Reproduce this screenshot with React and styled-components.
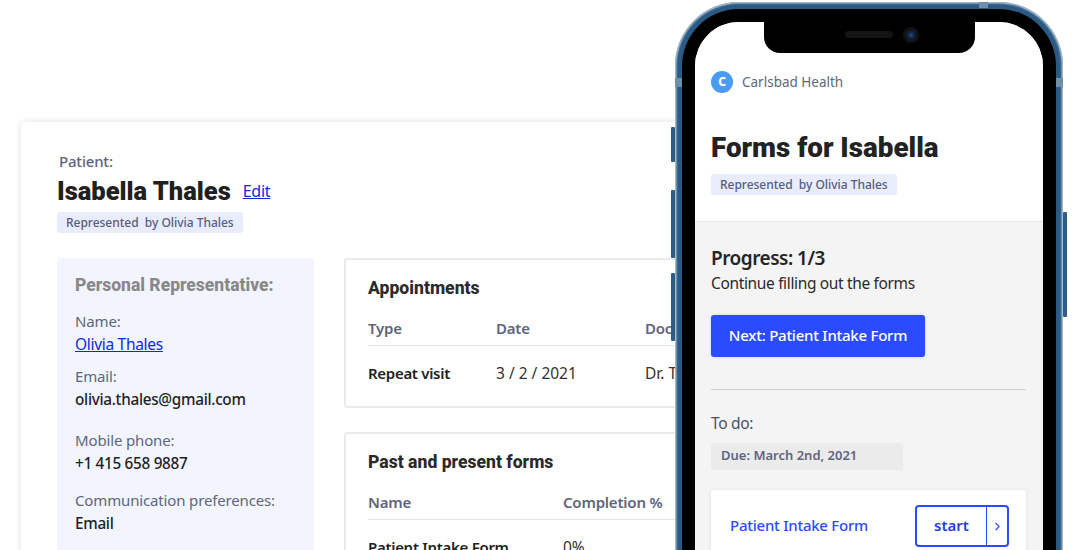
import React from 'react';
import styled, { createGlobalStyle } from 'styled-components';
import { ChevronRight } from 'lucide-react';

const GlobalStyle = createGlobalStyle`
  html, body {
    margin: 0;
    background: #fff;
    font-family: 'Noto Sans', 'Open Sans', sans-serif;
    overflow: hidden;
  }
  * { box-sizing: border-box; }
`;

const Page = styled.div`
  position: relative;
  width: 1080px;
  height: 550px;
  overflow: hidden;
  padding: 122px 0 0 21px;
  background: #fff;
`;

const DashCard = styled.section`
  width: 1000px;
  height: 600px;
  padding: 29px 36px;
  background: #fff;
  border-radius: 4px;
  box-shadow: 0 0 6px rgba(0, 0, 0, 0.14);
`;

const PatientLabel = styled.div`
  margin-left: 2px;
  font-size: 15px;
  line-height: 20px;
  font-weight: 500;
  color: #60657b;
  letter-spacing: -0.2px;
`;

const NameRow = styled.div`
  display: flex;
  align-items: center;
  gap: 12px;
  margin-top: 4px;
`;

const PatientName = styled.h1`
  margin: 0;
  font-family: 'Roboto', sans-serif;
  font-size: 25.5px;
  line-height: 32px;
  font-weight: 900;
  color: #202020;
`;

const TextLink = styled.a`
  color: #0b2bd8;
  text-decoration: underline;
  font-size: ${(p) => p.$size || 16}px;
  letter-spacing: -0.3px;
`;

const Badge = styled.span`
  display: inline-block;
  height: 21px;
  padding: 0 9px;
  border-radius: 3px;
  background: #e9ecfb;
  color: #555d85;
  font-size: 12px;
  line-height: 21px;
  font-weight: 500;
  white-space: pre;
  letter-spacing: -0.02px;
`;

const PatientBadge = styled(Badge)`
  margin-top: 5px;
`;

const Columns = styled.div`
  display: grid;
  grid-template-columns: 257px 1fr;
  gap: 30px;
  margin-top: 25px;
`;

const RepPanel = styled.aside`
  height: 400px;
  padding: 16px 18px;
  border-radius: 3px;
  background: #f2f5ff;
`;

const RepTitle = styled.h3`
  margin: 0 0 14px;
  font-family: 'Roboto', sans-serif;
  font-size: 17.5px;
  line-height: 22px;
  font-weight: 800;
  color: #888;
`;

const Field = styled.div`
  margin-bottom: ${(p) => p.$gap}px;
`;

const FieldLabel = styled.div`
  font-size: 15px;
  line-height: 23px;
  color: #60657b;
  letter-spacing: -0.15px;
`;

const FieldValue = styled.div`
  font-size: 15.3px;
  line-height: 23px;
  font-weight: 500;
  color: #1f1f1f;
  letter-spacing: -0.3px;
`;

const Stack = styled.div`
  display: flex;
  flex-direction: column;
  gap: 24px;
`;

const TableCard = styled.div`
  padding: 16px 22px 20px;
  height: ${(p) => p.$height}px;
  border: 2px solid #eaeaea;
  border-radius: 3px;
  background: #fff;
`;

const TableTitle = styled.h3`
  margin: 0 0 14px;
  font-family: 'Roboto', sans-serif;
  font-size: 17.6px;
  line-height: 24px;
  font-weight: 800;
  color: #2a2a2a;
`;

const TableRow = styled.div`
  display: grid;
  grid-template-columns: ${(p) => p.$cols};
  align-items: center;
  height: ${(p) => p.$height}px;
  border-bottom: ${(p) => (p.$head ? '1px solid #e4e4e4' : 'none')};
`;

const HeadCell = styled.div`
  font-size: 15px;
  font-weight: 600;
  color: #60657b;
  letter-spacing: -0.2px;
  padding-bottom: 4px;
`;

const StrongCell = styled.div`
  font-size: 15px;
  font-weight: 600;
  color: #222;
  letter-spacing: -0.3px;
`;

const Cell = styled.div`
  font-size: 15.5px;
  color: #333;
  white-space: nowrap;
`;

/* phone mockup lies over the dashboard */
const Phone = styled.div`
  position: absolute;
  left: 675px;
  top: 2px;
  width: 388px;
  height: 800px;
  padding: 7px;
  border-radius: 64px;
  background: #2b5b85;
  box-shadow: inset 0 0 1.5px 1.5px #b4c4d1;
`;

const SideButton = styled.i`
  position: absolute;
  top: ${(p) => p.$top}px;
  height: ${(p) => p.$height}px;
  width: 4px;
  background: #2f5d86;
  border-radius: 1px;
  ${(p) => (p.$right ? 'right: -4px;' : 'left: -4px;')}
`;

const AntennaBand = styled.i`
  position: absolute;
  background: #6f8fa9;
  ${(p) => p.$place}
`;

const Bezel = styled.div`
  position: relative;
  height: 100%;
  padding: 13px;
  border-radius: 57px;
  background: #000;
`;

const Notch = styled.div`
  position: absolute;
  top: 13px;
  left: 82px;
  width: 211px;
  height: 31px;
  display: flex;
  align-items: flex-start;
  justify-content: flex-end;
  gap: 10px;
  padding: 9px 56px 0 0;
  border-radius: 0 0 16px 16px;
  background: #000;
`;

const Speaker = styled.span`
  width: 48px;
  height: 7px;
  border-radius: 4px;
  background: #141414;
`;

const Camera = styled.span`
  width: 16px;
  height: 16px;
  margin-top: -4px;
  border-radius: 50%;
  background: radial-gradient(circle, #1c4f96 0, #10233f 28%, #111 55%);
`;

const Screen = styled.div`
  height: 100%;
  border-radius: 44px;
  overflow: hidden;
  background: #f4f4f5;
`;

const ScreenHead = styled.header`
  height: 200px;
  padding: 49px 16px 0;
  background: #fff;
  border-bottom: 1px solid #e8e8e8;
`;

const Brand = styled.div`
  display: flex;
  align-items: center;
  gap: 9px;
  height: 22px;
  font-size: 13.5px;
  color: #60657b;
`;

const BrandMark = styled.span`
  width: 22px;
  height: 22px;
  border-radius: 50%;
  background: #4a9cf3;
  color: #fff;
  font-size: 12px;
  font-weight: 800;
  line-height: 22px;
  text-align: center;
`;

const ScreenTitle = styled.h1`
  margin: 39px 0 8px;
  font-family: 'Roboto', sans-serif;
  font-size: 27.8px;
  line-height: 32px;
  font-weight: 900;
  color: #222;
`;

const ScreenBody = styled.div`
  padding: 24px 17px 0 16px;
`;

const ProgressTitle = styled.div`
  font-size: 19px;
  line-height: 24px;
  font-weight: 600;
  color: #252525;
  letter-spacing: -0.5px;
`;

const ProgressNote = styled.div`
  margin-top: 2px;
  font-size: 15.5px;
  line-height: 22px;
  color: #2a2a2a;
  letter-spacing: -0.35px;
`;

const NextButton = styled.button`
  display: block;
  width: 214px;
  height: 42px;
  margin-top: 21px;
  padding: 0 0 2px;
  border: 0;
  border-radius: 3px;
  background: #2b4bff;
  color: #fff;
  font: inherit;
  font-size: 15px;
  font-weight: 500;
  letter-spacing: -0.25px;
  box-shadow: 0 0 3px rgba(43, 75, 255, 0.2);
`;

const Divider = styled.hr`
  margin: 32px 0 0;
  border: 0;
  border-top: 1px solid #d0d0d0;
`;

const TodoLabel = styled.div`
  margin-top: 22px;
  font-size: 15.5px;
  line-height: 22px;
  color: #4d5060;
  letter-spacing: -0.3px;
`;

const DueChip = styled.div`
  width: 192px;
  height: 27px;
  margin-top: 9px;
  padding-left: 10px;
  border-radius: 3px;
  background: #ebebeb;
  color: #60657b;
  font-size: 13px;
  font-weight: 600;
  line-height: 25px;
`;

const FormCard = styled.div`
  display: flex;
  align-items: center;
  justify-content: space-between;
  height: 90px;
  margin-top: 20px;
  padding: 15px 17px 33px 19px;
  border-radius: 3px;
  background: #fff;
  box-shadow: 0 0 4px rgba(0, 0, 0, 0.08);
`;

const FormName = styled.span`
  margin-top: -2px;
  color: #2b4bff;
  font-size: 15px;
  font-weight: 500;
  letter-spacing: -0.25px;
`;

const StartButton = styled.div`
  display: grid;
  grid-template-columns: 70px 1fr;
  width: 94px;
  height: 42px;
  border: 2px solid #2b4bff;
  border-radius: 4px;
  color: #1f3fe0;
`;

const StartLabel = styled.span`
  font-size: 15px;
  font-weight: 600;
  line-height: 36px;
  text-align: center;
  border-right: 1px solid #2b4bff;
`;

const StartArrow = styled.span`
  display: flex;
  align-items: center;
  justify-content: center;
  color: #2b4bff;
`;

export default function App() {
  return (
    <Page>
      <GlobalStyle />
      <DashCard>
        <PatientLabel>Patient:</PatientLabel>
        <NameRow>
          <PatientName>Isabella Thales</PatientName>
          <TextLink href="#">Edit</TextLink>
        </NameRow>
        <PatientBadge>Represented  by Olivia Thales</PatientBadge>
        <Columns>
          <RepPanel>
            <RepTitle>Personal Representative:</RepTitle>
            <Field $gap={10}>
              <FieldLabel>Name:</FieldLabel>
              <TextLink href="#" $size={15.5}>Olivia Thales</TextLink>
            </Field>
            <Field $gap={18}>
              <FieldLabel>Email:</FieldLabel>
              <FieldValue>olivia.thales@gmail.com</FieldValue>
            </Field>
            <Field $gap={14}>
              <FieldLabel>Mobile phone:</FieldLabel>
              <FieldValue>+1 415 658 9887</FieldValue>
            </Field>
            <Field $gap={0}>
              <FieldLabel>Communication preferences:</FieldLabel>
              <FieldValue>Email</FieldValue>
            </Field>
          </RepPanel>
          <Stack>
            <TableCard $height={150}>
              <TableTitle>Appointments</TableTitle>
              <TableRow $head $height={32} $cols="128px 149px 1fr">
                <HeadCell>Type</HeadCell>
                <HeadCell>Date</HeadCell>
                <HeadCell>Doctor</HeadCell>
              </TableRow>
              <TableRow $height={54} $cols="128px 149px 1fr">
                <StrongCell>Repeat visit</StrongCell>
                <Cell>3 / 2 / 2021</Cell>
                <Cell>Dr. Thompson</Cell>
              </TableRow>
            </TableCard>
            <TableCard $height={200}>
              <TableTitle>Past and present forms</TableTitle>
              <TableRow $head $height={32} $cols="195px 1fr">
                <HeadCell>Name</HeadCell>
                <HeadCell>Completion %</HeadCell>
              </TableRow>
              <TableRow $height={54} $cols="195px 1fr">
                <StrongCell>Patient Intake Form</StrongCell>
                <Cell>0%</Cell>
              </TableRow>
            </TableCard>
          </Stack>
        </Columns>
      </DashCard>

      <Phone>
        <SideButton $top={125} $height={35} />
        <SideButton $top={188} $height={68} />
        <SideButton $top={271} $height={68} />
        <SideButton $right $top={210} $height={105} />
        <AntennaBand $place="left: 0; top: 76px; width: 7px; height: 9px;" />
        <AntennaBand $place="right: 0; top: 76px; width: 7px; height: 9px;" />
        <AntennaBand $place="left: 304px; top: 0; width: 9px; height: 6px;" />
        <Bezel>
          <Notch>
            <Speaker />
            <Camera />
          </Notch>
          <Screen>
            <ScreenHead>
              <Brand>
                <BrandMark>C</BrandMark>
                Carlsbad Health
              </Brand>
              <ScreenTitle>Forms for Isabella</ScreenTitle>
              <Badge>Represented  by Olivia Thales</Badge>
            </ScreenHead>
            <ScreenBody>
              <ProgressTitle>Progress: 1/3</ProgressTitle>
              <ProgressNote>Continue filling out the forms</ProgressNote>
              <NextButton>Next: Patient Intake Form</NextButton>
              <Divider />
              <TodoLabel>To do:</TodoLabel>
              <DueChip>Due: March 2nd, 2021</DueChip>
              <FormCard>
                <FormName>Patient Intake Form</FormName>
                <StartButton>
                  <StartLabel>start</StartLabel>
                  <StartArrow>
                    <ChevronRight size={13} strokeWidth={2} />
                  </StartArrow>
                </StartButton>
              </FormCard>
            </ScreenBody>
          </Screen>
        </Bezel>
      </Phone>
    </Page>
  );
}
